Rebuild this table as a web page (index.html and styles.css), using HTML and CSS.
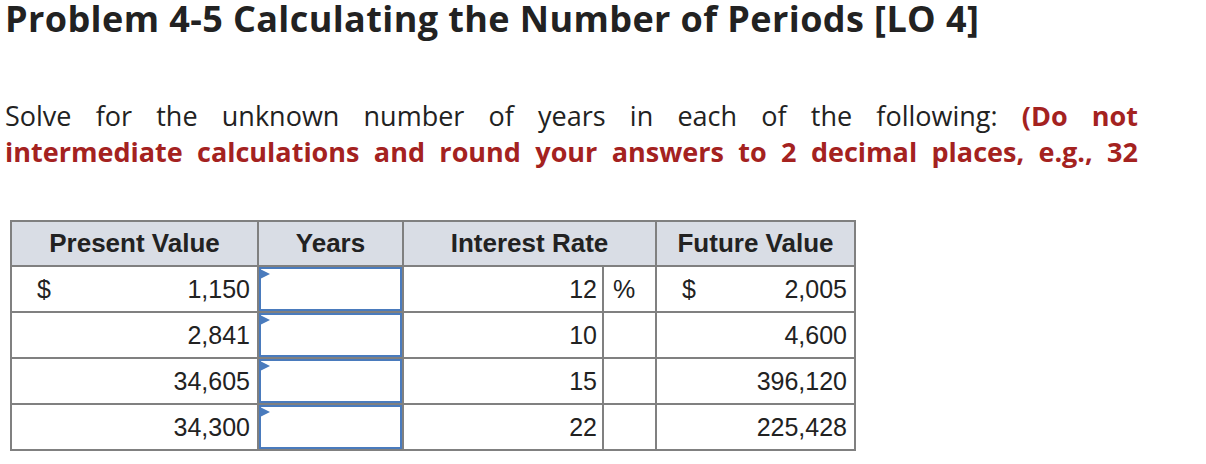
FILE: index.html
```html
<!DOCTYPE html>
<html lang="en">
<head>
<meta charset="utf-8">
<title>Problem 4-5</title>
<link rel="stylesheet" href="styles.css">
</head>
<body>
<div class="page">
  <h1 class="title">Problem 4-5 Calculating the Number of Periods [LO 4]</h1>
  <p class="prompt">Solve for the unknown number of years in each of the following: <strong class="note">(Do not</strong><br><strong class="note">intermediate calculations and round your answers to 2 decimal places, e.g., 32</strong></p>
  <table class="grid">
    <colgroup>
      <col class="c-pv">
      <col class="c-yr">
      <col class="c-ir">
      <col class="c-pc">
      <col class="c-fv">
    </colgroup>
    <thead>
      <tr>
        <th>Present Value</th>
        <th>Years</th>
        <th colspan="2">Interest Rate</th>
        <th>Future Value</th>
      </tr>
    </thead>
    <tbody>
      <tr>
        <td class="money"><span class="cur">$</span><span class="amt">1,150</span></td>
        <td class="answer"><div class="field"><span class="flag"></span></div></td>
        <td class="num">12</td>
        <td class="unit">%</td>
        <td class="money"><span class="cur">$</span><span class="amt">2,005</span></td>
      </tr>
      <tr>
        <td class="money"><span class="cur"></span><span class="amt">2,841</span></td>
        <td class="answer"><div class="field"><span class="flag"></span></div></td>
        <td class="num">10</td>
        <td class="unit"></td>
        <td class="money"><span class="cur"></span><span class="amt">4,600</span></td>
      </tr>
      <tr>
        <td class="money"><span class="cur"></span><span class="amt">34,605</span></td>
        <td class="answer"><div class="field"><span class="flag"></span></div></td>
        <td class="num">15</td>
        <td class="unit"></td>
        <td class="money"><span class="cur"></span><span class="amt">396,120</span></td>
      </tr>
      <tr>
        <td class="money"><span class="cur"></span><span class="amt">34,300</span></td>
        <td class="answer"><div class="field"><span class="flag"></span></div></td>
        <td class="num">22</td>
        <td class="unit"></td>
        <td class="money"><span class="cur"></span><span class="amt">225,428</span></td>
      </tr>
    </tbody>
  </table>
</div>
</body>
</html>
```
FILE: styles.css
```css
html, body {
  margin: 0;
  padding: 0;
  background: #ffffff;
}
.page {
  padding: 0 0 0 5px;
  width: 1133px;
  font-family: "Open Sans", "Lato", sans-serif;
  color: #222222;
}
.title {
  margin: 0;
  font-size: 36px;
  line-height: 38px;
  font-weight: 700;
  letter-spacing: 0.4px;
  color: #222222;
}
.prompt {
  margin: 60px 0 0 0;
  font-size: 27px;
  line-height: 36px;
  text-align: justify;
  text-align-last: justify;
  color: #222222;
}
.note {
  color: #a4221f;
  font-weight: 700;
}
.grid {
  margin: 50px 0 0 5px;
  border-collapse: collapse;
  table-layout: fixed;
  width: 846px;
  font-family: "Liberation Sans", Arial, sans-serif;
  font-size: 25px;
  color: #222222;
}
.c-pv { width: 247px; }
.c-yr { width: 145px; }
.c-ir { width: 200px; }
.c-pc { width: 53px; }
.c-fv { width: 199px; }
.grid th,
.grid td {
  border: 2px solid #808080;
  padding: 0;
}
.grid th {
  height: 43px;
  background: #d9dde5;
  font-size: 26px;
  font-weight: 700;
  text-align: center;
  vertical-align: middle;
}
.grid td {
  height: 44px;
  vertical-align: middle;
}
.grid td.money {
  padding: 0 7px 0 25px;
  white-space: nowrap;
}
.money .cur {
  float: left;
}
.money .amt {
  float: right;
}
.grid td.num {
  text-align: right;
  padding-right: 5px;
}
.grid td.unit {
  padding-left: 9px;
}
.field {
  position: relative;
  height: 44px;
  border: 2px solid #4a7bbd;
  box-sizing: border-box;
}
.flag {
  position: absolute;
  left: -1px;
  top: 0;
  width: 0;
  height: 0;
  border-left: 10px solid #4a7bbd;
  border-top: 5px solid transparent;
  border-bottom: 5px solid transparent;
}
```
